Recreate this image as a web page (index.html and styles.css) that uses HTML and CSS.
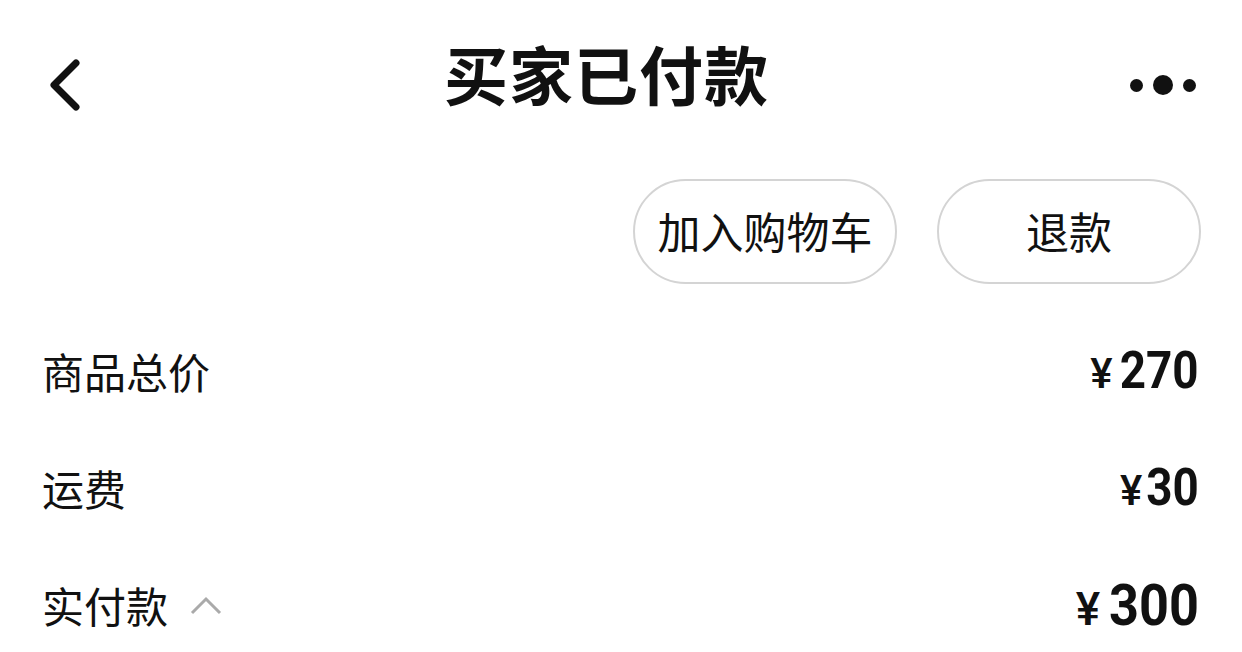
FILE: index.html
```html
<!DOCTYPE html>
<html lang="zh-CN">
<head>
  <meta charset="UTF-8" />
  <title>买家已付款</title>
  <link rel="stylesheet" href="styles.css">
</head>
<body>

  <div class="topbar">
    <a class="back" href="#">
      <svg width="36" height="52" viewBox="0 0 36 52">
        <path d="M30 4 L8 26 L30 48" fill="none" stroke="#111" stroke-width="7" stroke-linecap="round" stroke-linejoin="round"/>
      </svg>
    </a>
    <h1 class="title">买家已付款</h1>
    <a class="more" href="#">
      <span class="dot"></span>
      <span class="dot big"></span>
      <span class="dot"></span>
    </a>
  </div>

  <div class="actions">
    <button class="pill">加入购物车</button>
    <button class="pill">退款</button>
  </div>

  <!-- order amount summary -->
  <div class="summary">
    <div class="row">
      <span class="label">商品总价</span>
      <span class="price"><span class="yen">¥</span><span class="num">270</span></span>
    </div>
    <div class="row">
      <span class="label">运费</span>
      <span class="price"><span class="yen">¥</span><span class="num">30</span></span>
    </div>
    <div class="row total">
      <span class="label">实付款
        <svg class="caret" width="32" height="20" viewBox="0 0 32 20">
          <path d="M2 18 L16 4 L30 18" fill="none" stroke="#aaa" stroke-width="3"/>
        </svg>
      </span>
      <span class="price"><span class="yen">¥</span><span class="num">300</span></span>
    </div>
  </div>

</body>
</html>
```

FILE: styles.css
```css
body {
  margin: 0;
  background: #fff;
  color: #111;
  font-family: "Noto Sans CJK SC", "Noto Sans", sans-serif;
}
.topbar {
  height: 170px;
  display: flex;
  align-items: center;
  justify-content: space-between;
  padding: 0 46px;
}
.back {
  display: flex;
  width: 120px;
}
.title {
  margin: 0 0 26px;
  font-size: 64px;
  font-weight: 700;
  letter-spacing: 1px;
}
.more {
  width: 149px;
  display: flex;
  justify-content: flex-end;
  align-items: center;
  gap: 10px;
  text-decoration: none;
}
.dot {
  width: 13px;
  height: 13px;
  border-radius: 50%;
  background: #111;
}
.dot.big {
  width: 20px;
  height: 20px;
}
.actions {
  display: flex;
  justify-content: flex-end;
  gap: 40px;
  padding: 9px 41px 0 0;
}
.pill {
  width: 264px;
  height: 105px;
  border: 2px solid #d4d4d4;
  border-radius: 53px;
  background: #fff;
  color: #111;
  font-family: inherit;
  font-size: 43px;
  padding: 0 0 3px;
}
.summary {
  padding: 28px 43px 0 42px;
}
.row {
  height: 117px;
  display: flex;
  align-items: center;
  justify-content: space-between;
}
.label {
  font-size: 42px;
  display: flex;
  align-items: center;
}
.caret {
  margin-left: 22px;
}
.price {
  font-family: "Roboto", sans-serif;
  font-weight: 700;
  font-size: 52px;
  display: flex;
  align-items: baseline;
}
.yen {
  font-size: 42px;
  font-weight: 500;
  margin-right: 7px;
}
/* narrow the digits to a condensed look */
.num {
  display: inline-block;
  transform: scaleX(0.88);
  transform-origin: right;
  margin-left: -10px;
}
.total .price {
  font-size: 58px;
}
.total .yen {
  font-size: 46px;
  margin-right: 9px;
}
.total .num {
  transform: scaleX(0.9);
}
```
